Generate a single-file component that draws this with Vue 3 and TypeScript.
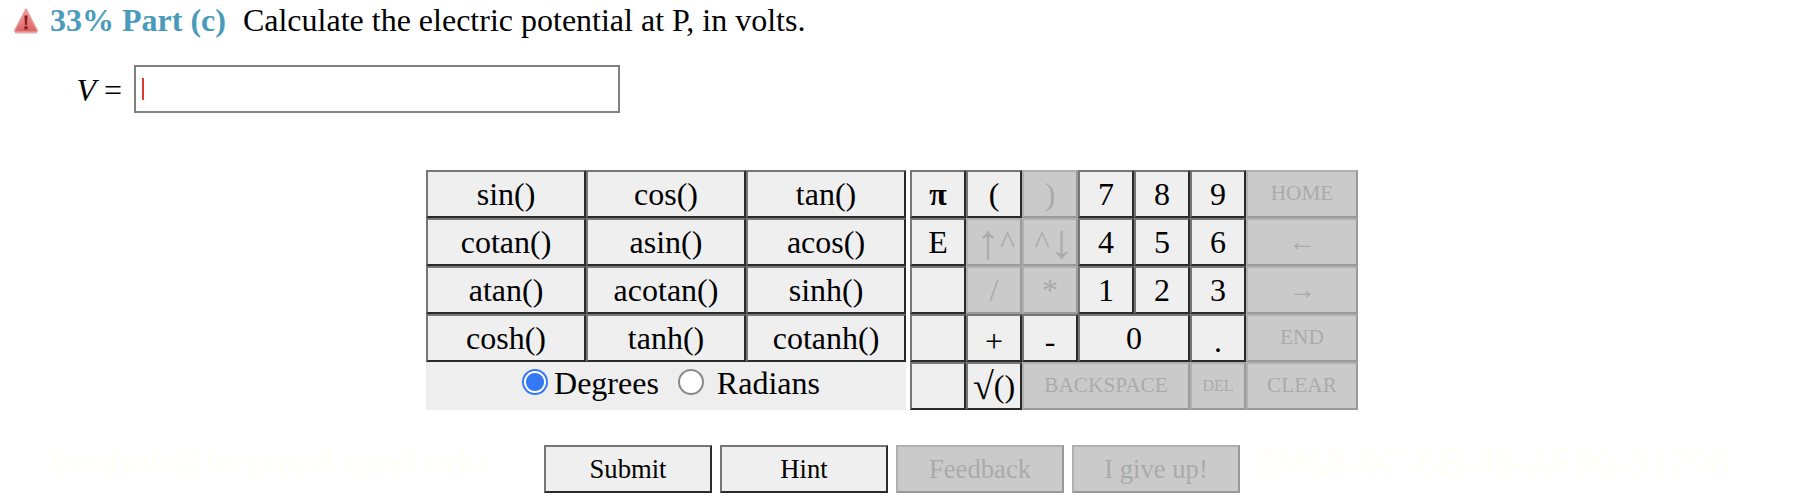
<script setup lang="ts">
interface Key { label: string; off?: boolean; span?: string; size?: string; cls?: string; big?: string; after?: string }

const funcs: string[] = [
  'sin()', 'cos()', 'tan()',
  'cotan()', 'asin()', 'acos()',
  'atan()', 'acotan()', 'sinh()',
  'cosh()', 'tanh()', 'cotanh()',
]

const keys: Key[] = [
  { label: 'π', cls: 'pi' }, { label: '(' }, { label: ')', off: true },
  { label: '7' }, { label: '8' }, { label: '9' }, { label: 'HOME', off: true, size: 'small' },
  { label: 'E' },
  { label: '^', big: '↑', off: true, cls: 'up' },
  { label: '', big: '↓', after: '^', off: true, cls: 'down' },
  { label: '4' }, { label: '5' }, { label: '6' }, { label: '←', off: true, size: 'arrow' },
  { label: '' }, { label: '/', off: true }, { label: '*', off: true },
  { label: '1' }, { label: '2' }, { label: '3' }, { label: '→', off: true, size: 'arrow' },
  { label: '' }, { label: '+', cls: 'low' }, { label: '-', cls: 'low' },
  { label: '0', span: 'span2' }, { label: '.', cls: 'low' }, { label: 'END', off: true, size: 'small' },
  { label: '' }, { label: '()', big: '√', cls: 'root' },
  { label: 'BACKSPACE', off: true, span: 'span3', size: 'small' },
  { label: 'DEL', off: true, size: 'tiny' },
  { label: 'CLEAR', off: true, size: 'small' },
]

const actions = [
  { label: 'Submit', off: false },
  { label: 'Hint', off: false },
  { label: 'Feedback', off: true },
  { label: 'I give up!', off: true },
]
</script>

<template>
  <main class="page">
    <header class="title">
      <svg class="warn" viewBox="0 0 26 28" aria-hidden="true">
        <defs>
          <linearGradient id="warnFill" x1="0" y1="0" x2="0" y2="1">
            <stop offset="0" stop-color="#f0a3a3" />
            <stop offset="1" stop-color="#de5f60" />
          </linearGradient>
        </defs>
        <rect x="2" y="24.5" width="22" height="2.5" rx="1" fill="#e4d6d6" />
        <path d="M13 2 L24 23 Q24.6 25 23 25 H3 Q1.4 25 2 23 Z" fill="url(#warnFill)" stroke="#e79a9a" stroke-width="1.6" stroke-linejoin="round" />
        <path d="M11.4 8.5 H14.6 L14 18 H12 Z" fill="#8a1f22" />
        <rect x="11.4" y="19.2" width="3.2" height="3.2" fill="#8a1f22" />
      </svg>
      <span class="part">33% Part (c)</span>
      <span class="question">Calculate the electric potential at P, in volts.</span>
    </header>

    <div class="answer">
      <span class="var"><i>V</i> =</span>
      <div class="field"><span class="caret"></span></div>
    </div>

    <section class="pad">
      <div class="funcs">
        <button v-for="f in funcs" :key="f" class="key" type="button">{{ f }}</button>
        <div class="units">
          <label class="unit"><span class="radio on"></span><span>Degrees</span></label>
          <label class="unit"><span class="radio"></span><span class="rad">Radians</span></label>
        </div>
      </div>
      <div class="keys">
        <button
          v-for="(k, i) in keys"
          :key="i"
          type="button"
          class="key"
          :class="[k.off && 'off', k.span, k.size, k.cls]"
        ><template v-if="k.after">{{ k.after }}</template><span v-if="k.big" class="big">{{ k.big }}</span>{{ k.label }}</button>
      </div>
    </section>

    <footer class="actions">
      <span class="mark mark-left">lambali@terpmail.umd.edu</span>
      <button v-for="a in actions" :key="a.label" type="button" class="key act" :class="{ off: a.off }">{{ a.label }}</button>
      <span class="mark mark-right">2M68-0C-6B-45-AF90-31296</span>
    </footer>
  </main>
</template>

<style>
html, body { margin: 0; background: #fff; }
</style>

<style scoped>
.page {
  width: 1795px;
  height: 498px;
  overflow: hidden;
  font-family: "Liberation Serif", "Times New Roman", serif;
  color: #000;
  box-sizing: border-box;
  padding-top: 2px;
}
.title {
  display: flex;
  align-items: center;
  height: 36px;
  padding-left: 13px;
  font-size: 32px;
}
.warn { width: 26px; height: 28px; margin-right: 11px; flex: none; margin-top: 2px; }
.part { color: #4a9bbb; font-weight: bold; margin-right: 17px; }
.answer {
  display: flex;
  align-items: center;
  margin-top: 27px;
  font-size: 32px;
}
.var { width: 122px; text-align: right; margin-right: 12px; padding-top: 2px; }
.field {
  width: 486px;
  height: 48px;
  box-sizing: border-box;
  border: 2px solid #808080;
  display: flex;
  align-items: center;
  padding-left: 6px;
}
.caret { width: 2px; height: 22px; background: #e23b2e; }
.pad {
  display: flex;
  gap: 4px;
  margin: 57px 0 0 426px;
}
.funcs {
  display: grid;
  grid-template-columns: repeat(3, 160px);
  grid-auto-rows: 48px;
}
.keys {
  display: grid;
  grid-template-columns: repeat(6, 56px) 112px;
  grid-auto-rows: 48px;
}
.key {
  margin: 0;
  padding: 0;
  box-sizing: border-box;
  background: #efefef;
  color: #000;
  font: 32px/1 "Liberation Serif", "Times New Roman", serif;
  border: 2px solid;
  border-color: #767676 #2a2a2a #2a2a2a #767676;
  white-space: nowrap;
}
.key.off {
  background: #cacaca;
  color: #aaa;
  border-color: #b0b0b0 #9a9a9a #9a9a9a #b0b0b0;
}
.span2 { grid-column: span 2; }
.span3 { grid-column: span 3; }
.small { font-size: 21.3px; }
.tiny { font-size: 16px; }
.arrow { font-size: 28px; }
.low { padding-top: 6px; }
.pi { font-weight: bold; }
.big { font-size: 48px; line-height: 0; vertical-align: -5px; }
.up { padding-left: 3px; }
.down { padding-left: 8px; }
.root .big { font-size: 38px; vertical-align: -2px; }
.units {
  grid-column: 1 / -1;
  background: #eee;
  display: flex;
  justify-content: center;
  align-items: center;
  gap: 19px;
  font-size: 32px;
  padding: 0 0 6px 10px;
}
.unit { display: flex; align-items: center; gap: 6px; }
.rad { margin-left: 7px; }
.radio {
  width: 26px;
  height: 26px;
  box-sizing: border-box;
  border-radius: 50%;
  background: #fff;
  border: 2px solid #8a8a8a;
  flex: none;
  margin-top: -2px;
}
.radio.on {
  border-color: #3478f6;
  background: radial-gradient(circle, #3478f6 0 8.5px, #fff 9.5px);
}
.actions {
  display: flex;
  align-items: flex-start;
  gap: 8px;
  margin-top: 35px;
  padding-left: 52px;
}
.act {
  width: 168px;
  height: 48px;
  font-size: 26.67px;
}
.mark {
  font: 36.6px/36px "Liberation Sans", Arial, sans-serif;
  color: #fffff7;
  white-space: nowrap;
}
.mark-left { width: 484px; }
.mark-right { margin-left: 8px; }
</style>
